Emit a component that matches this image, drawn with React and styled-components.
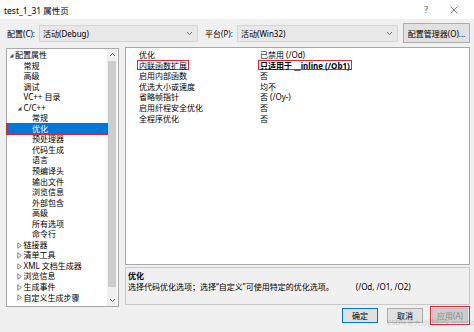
import React from "react";
import styled, { createGlobalStyle } from "styled-components";

const GlobalStyle = createGlobalStyle`
  html, body {
    margin: 0;
    padding: 0;
    background: #f0f0f0;
  }
  body {
    font-family: "Noto Sans", "Noto Sans CJK SC", sans-serif;
    font-size: 8px;
    color: #000;
  }
`;

const Dialog = styled.div`
  position: relative;
  width: 474px;
  height: 332px;
  overflow: hidden;
  background: #f0f0f0;
  display: flex;
  flex-direction: column;
`;

const TitleBar = styled.div`
  height: 19px;
  background: #fff;
  display: flex;
  align-items: center;
  padding: 0 6px 0 4px;
  font-size: 8.5px;
`;

const Title = styled.div`
  flex: 1;
`;

const TitleButton = styled.div`
  width: 28px;
  display: flex;
  justify-content: center;
  color: #555;
`;

const ConfigRow = styled.div`
  display: flex;
  align-items: center;
  height: 20px;
  margin-top: 4px;
  padding: 0 4px 0 7px;
`;

const Label = styled.span`
  width: ${(p) => p.$w}px;
  flex: none;
`;

const Combo = styled.div`
  width: ${(p) => p.$w}px;
  height: 17px;
  box-sizing: border-box;
  background: #e8e8e8;
  border: 1px solid #d4d4d4;
  display: flex;
  align-items: center;
  padding: 0 4px 0 3px;
  margin-right: ${(p) => p.$mr || 0}px;
  justify-content: space-between;
`;

const PushButton = styled.div`
  width: ${(p) => p.$w}px;
  height: ${(p) => p.$h || 20}px;
  box-sizing: border-box;
  display: flex;
  align-items: center;
  justify-content: center;
  white-space: nowrap;
  background: ${(p) => (p.$disabled ? "#cccccc" : "#e1e1e1")};
  border: 1px solid ${(p) => (p.$default ? "#0078d7" : p.$disabled ? "#bfbfbf" : "#adadad")};
  color: ${(p) => (p.$disabled ? "#8a8a8a" : "#000")};
  margin-left: ${(p) => p.$ml || 0}px;
  outline: ${(p) => (p.$marked ? "1px solid #dc2638" : "none")};
  outline-offset: 1px;
`;

const Main = styled.div`
  display: flex;
  margin-top: 4px;
  padding: 0 4px 0 6px;
  gap: 6px;
`;

const TreePanel = styled.div`
  width: 113px;
  height: 259px;
  margin-top: 1px;
  box-sizing: border-box;
  border: 1px solid #a8a8a8;
  background: #fff;
  display: flex;
`;

const TreeList = styled.div`
  flex: 1;
  padding-top: 1px;
`;

const TreeRow = styled.div`
  height: 10.55px;
  line-height: 10.55px;
  display: flex;
  align-items: center;
  padding-left: ${(p) => p.$lvl * 8.5}px;
  white-space: nowrap;
  background: ${(p) => (p.$selected ? "#0078d7" : "transparent")};
  color: ${(p) => (p.$selected ? "#fff" : "#000")};
  box-shadow: ${(p) => (p.$selected ? "0 0 0 1px #dc2638" : "none")};
  position: relative;
`;

const Expander = styled.span`
  width: 8px;
  flex: none;
  display: flex;
  justify-content: center;
  align-items: center;
`;

const ScrollBar = styled.div`
  width: 10px;
  background: #f0f0f0;
  display: flex;
  flex-direction: column;
  align-items: center;
  margin-right: 1px;
`;

const ScrollArrow = styled.div`
  height: 11px;
  display: flex;
  align-items: center;
  justify-content: center;
`;

const ScrollThumb = styled.div`
  flex: 1;
  width: 8px;
  margin: 1px 0 8px;
  background: #cdcdcd;
`;

const RightColumn = styled.div`
  width: 345px;
  display: flex;
  flex-direction: column;
`;

const PropGrid = styled.div`
  height: 218px;
  box-sizing: border-box;
  border: 1px solid #a8a8a8;
  background: #fff;
  padding: 1px 0 0 13px;
`;

const PropRow = styled.div`
  display: grid;
  grid-template-columns: 121px 1fr;
  height: 10.55px;
  line-height: 10.55px;
  white-space: nowrap;
`;

const Cell = styled.span`
  justify-self: start;
  padding: 0 1px;
  margin-left: -2px;
  height: 10px;
  line-height: 9px;
  align-self: center;
  box-sizing: border-box;
  border: 1px solid ${(p) => (p.$marked ? "#dc2638" : "transparent")};
  font-weight: ${(p) => (p.$bold ? 700 : 400)};
`;

const Description = styled.div`
  height: 38px;
  margin-top: 2px;
  box-sizing: border-box;
  border: 1px solid #c8c8c8;
  padding: 3px 2px;
  line-height: 10.5px;
`;

const DescTitle = styled.div`
  font-weight: 700;
`;

const Options = styled.span`
  margin-left: 22px;
`;

const Footer = styled.div`
  display: flex;
  justify-content: flex-end;
  margin-top: 3px;
  padding-right: 2px;
`;

const Watermark = styled.div`
  position: absolute;
  left: 387px;
  top: 317px;
  font-size: 7px;
  color: rgba(120, 120, 120, 0.35);
  white-space: nowrap;
  pointer-events: none;
`;

const Chevron = ({ up }) => (
  <svg width="7" height="5" viewBox="0 0 7 5">
    <polyline
      points={up ? "1,4 3.5,1.5 6,4" : "1,1 3.5,3.5 6,1"}
      fill="none"
      stroke="#606060"
      strokeWidth="0.9"
    />
  </svg>
);

const Triangle = ({ open }) =>
  open ? (
    <svg width="5" height="5" viewBox="0 0 5 5">
      <polygon points="4.5,0.5 4.5,4.5 0.5,4.5" fill="#444" />
    </svg>
  ) : (
    <svg width="5" height="7" viewBox="0 0 5 7">
      <polygon points="0.8,0.8 4.4,3.5 0.8,6.2" fill="none" stroke="#666" strokeWidth="0.8" />
    </svg>
  );

const tree = [
  { t: "配置属性", lvl: 0, exp: "open" },
  { t: "常规", lvl: 1 },
  { t: "高级", lvl: 1 },
  { t: "调试", lvl: 1 },
  { t: "VC++ 目录", lvl: 1 },
  { t: "C/C++", lvl: 1, exp: "open" },
  { t: "常规", lvl: 2 },
  { t: "优化", lvl: 2, selected: true },
  { t: "预处理器", lvl: 2 },
  { t: "代码生成", lvl: 2 },
  { t: "语言", lvl: 2 },
  { t: "预编译头", lvl: 2 },
  { t: "输出文件", lvl: 2 },
  { t: "浏览信息", lvl: 2 },
  { t: "外部包含", lvl: 2 },
  { t: "高级", lvl: 2 },
  { t: "所有选项", lvl: 2 },
  { t: "命令行", lvl: 2 },
  { t: "链接器", lvl: 1, exp: "closed" },
  { t: "清单工具", lvl: 1, exp: "closed" },
  { t: "XML 文档生成器", lvl: 1, exp: "closed" },
  { t: "浏览信息", lvl: 1, exp: "closed" },
  { t: "生成事件", lvl: 1, exp: "closed" },
  { t: "自定义生成步骤", lvl: 1, exp: "closed" },
];

const props = [
  { name: "优化", value: "已禁用 (/Od)" },
  { name: "内联函数扩展", value: "只适用于 __inline (/Ob1)", marked: true },
  { name: "启用内部函数", value: "否" },
  { name: "优选大小或速度", value: "均不" },
  { name: "省略帧指针", value: "否 (/Oy-)" },
  { name: "启用纤程安全优化", value: "否" },
  { name: "全程序优化", value: "否" },
];

export default function App() {
  return (
    <Dialog>
      <GlobalStyle />
      <TitleBar>
        <Title>test_1_31 属性页</Title>
        <TitleButton>?</TitleButton>
        <TitleButton>
          <svg width="8" height="8" viewBox="0 0 8 8">
            <path d="M0.5 0.5 L7.5 7.5 M7.5 0.5 L0.5 7.5" stroke="#555" strokeWidth="0.8" />
          </svg>
        </TitleButton>
      </TitleBar>

      <ConfigRow>
        <Label $w={32}>配置(C):</Label>
        <Combo $w={159} $mr={7}>
          <span>活动(Debug)</span>
          <Chevron />
        </Combo>
        <Label $w={32}>平台(P):</Label>
        <Combo $w={161}>
          <span>活动(Win32)</span>
          <Chevron />
        </Combo>
        <PushButton $w={67} $ml={5}>配置管理器(O)...</PushButton>
      </ConfigRow>

      <Main>
        <TreePanel>
          <TreeList>
            {tree.map((item, i) => (
              <TreeRow key={i} $lvl={item.lvl} $selected={item.selected}>
                <Expander>{item.exp && <Triangle open={item.exp === "open"} />}</Expander>
                {item.t}
              </TreeRow>
            ))}
          </TreeList>
          <ScrollBar>
            <ScrollArrow>
              <Chevron up />
            </ScrollArrow>
            <ScrollThumb />
            <ScrollArrow>
              <Chevron />
            </ScrollArrow>
          </ScrollBar>
        </TreePanel>

        <RightColumn>
          <PropGrid>
            {props.map((p) => (
              <PropRow key={p.name}>
                <Cell $marked={p.marked}>{p.name}</Cell>
                <Cell $marked={p.marked} $bold={p.marked}>
                  {p.value}
                </Cell>
              </PropRow>
            ))}
          </PropGrid>
          <Description>
            <DescTitle>优化</DescTitle>
            <div>
              选择代码优化选项；选择“自定义”可使用特定的优化选项。
              <Options>(/Od, /O1, /O2)</Options>
            </div>
          </Description>
          <Footer>
            <PushButton $w={36} $h={15} $default>确定</PushButton>
            <PushButton $w={36} $h={15} $ml={9}>取消</PushButton>
            <PushButton $w={36} $h={15} $ml={9} $disabled $marked>应用(A)</PushButton>
          </Footer>
        </RightColumn>
      </Main>
      <Watermark>CSDN @大沙雕制作 anduSon</Watermark>
    </Dialog>
  );
}
